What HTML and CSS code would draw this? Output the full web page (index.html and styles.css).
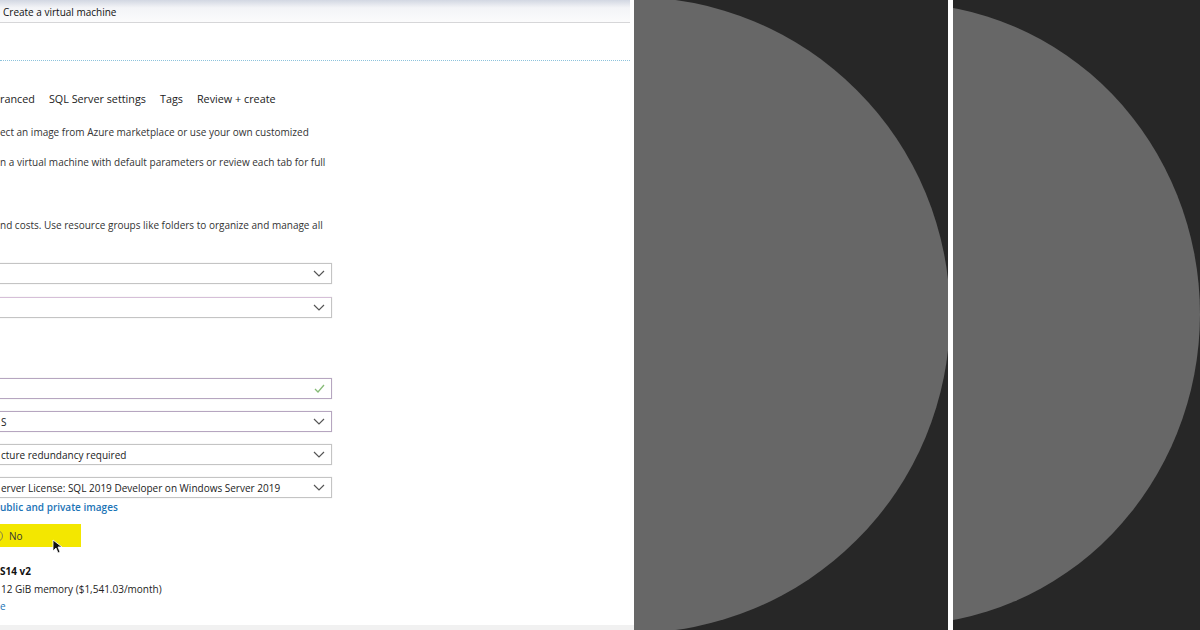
FILE: index.html
```html
<!DOCTYPE html>
<html lang="en">
<head>
  <meta charset="UTF-8" />
  <title>Create a virtual machine</title>
  <link rel="stylesheet" href="styles.css">
</head>
<body>

<div class="screen">

  <div class="blade">
    <div class="titlebar">Create a virtual machine</div>
    <div class="progress"></div>

    <div class="blade-body">
      <div class="tabs">
        <span>ranced</span>
        <span>SQL Server settings</span>
        <span>Tags</span>
        <span>Review + create</span>
      </div>

      <p class="desc first">ect an image from Azure marketplace or use your own customized</p>
      <p class="desc second">n a virtual machine with default parameters or review each tab for full</p>
      <p class="desc third">nd costs. Use resource groups like folders to organize and manage all</p>

      <div class="field sub">
        <span class="value"></span>
        <svg class="chevron" width="12" height="7" viewBox="0 0 12 7"><path d="M1 1l5 5 5-5" /></svg>
      </div>
      <div class="field group">
        <span class="value"></span>
        <svg class="chevron" width="12" height="7" viewBox="0 0 12 7"><path d="M1 1l5 5 5-5" /></svg>
      </div>

      <div class="field name purple">
        <span class="value"></span>
        <svg class="check" width="11" height="9" viewBox="0 0 11 9"><path d="M1 5l3 3 6-7" /></svg>
      </div>
      <div class="field region purple">
        <span class="value">S</span>
        <svg class="chevron" width="12" height="7" viewBox="0 0 12 7"><path d="M1 1l5 5 5-5" /></svg>
      </div>
      <div class="field">
        <span class="value">cture redundancy required</span>
        <svg class="chevron" width="12" height="7" viewBox="0 0 12 7"><path d="M1 1l5 5 5-5" /></svg>
      </div>
      <div class="field">
        <span class="value">erver License: SQL 2019 Developer on Windows Server 2019</span>
        <svg class="chevron" width="12" height="7" viewBox="0 0 12 7"><path d="M1 1l5 5 5-5" /></svg>
      </div>
      <a class="browse">ublic and private images</a>

      <div class="spot">
        <div class="highlight">
          <span class="radio"></span>
          <span>No</span>
        </div>
        <svg class="cursor" width="10" height="15" viewBox="0 0 10 15">
          <path d="M1 1v11l3-3 2 5 2-1-2-5h4z" fill="#111" stroke="#fff" stroke-width="0.8" />
        </svg>
      </div>

      <div class="size-name">S14 v2</div>
      <div class="size-info">12 GiB memory ($1,541.03/month)</div>
      <a class="change">e</a>
    </div>

    <div class="footer-bar"></div>
  </div>

  <div class="slide one">
    <svg width="314" height="630" viewBox="0 0 314 630">
      <circle cx="-2" cy="315" r="318" fill="#676767" />
    </svg>
  </div>

  <div class="divider"></div>

  <div class="slide two">
    <svg width="247" height="630" viewBox="0 0 247 630">
      <ellipse cx="-53" cy="314" rx="300" ry="311" fill="#676767" />
    </svg>
  </div>

</div>

</body>
</html>
```

FILE: styles.css
```css
body {
  margin: 0;
  font-family: "Open Sans", "Noto Sans", sans-serif;
  background: #fff;
  color: #222;
}

.screen {
  display: flex;
  width: 1200px;
  height: 630px;
  overflow: hidden;
}

/* ===== left blade ===== */
.blade {
  width: 634px;
  flex: none;
  background: #fff;
  display: flex;
  flex-direction: column;
  overflow: hidden;
}

.titlebar {
  width: 627px;
  height: 22px;
  padding-left: 3px;
  border-bottom: 1px solid #d6d6d8;
  background: linear-gradient(#d2d7e2 0, #f3f4f7 35%, #fbfbfc 100%);
  font-size: 10px;
  line-height: 24px;
  color: #111;
}

.progress {
  width: 630px;
  margin-top: 37px;
  border-top: 1px dotted #8dc3dc;
}

.blade-body {
  flex: 1;
  display: flex;
  flex-direction: column;
  align-items: flex-start;
}

.tabs {
  display: flex;
  gap: 14px;
  margin-top: 30px;
  font-size: 10.8px;
  line-height: 16px;
  color: #222;
}

.desc {
  margin: 0;
  font-size: 10px;
  line-height: 16px;
  color: #333;
}

.desc.first { margin-top: 17px; }
.desc.second { margin-top: 14px; }
.desc.third { margin-top: 47px; }

/* ===== form fields ===== */
.field {
  box-sizing: border-box;
  width: 352px;
  height: 21px;
  margin-left: -20px;
  margin-top: 12px;
  padding: 0 6px 0 20px;
  border: 1px solid #c4c4c4;
  box-shadow: 0 0 1px #ddd;
  display: flex;
  align-items: center;
  justify-content: space-between;
  font-size: 10px;
  color: #222;
}

.field.sub { margin-top: 30px; }
.field.group { margin-top: 13px; border-top-color: #d6bfd8; }
.field.name { margin-top: 60px; }

.field.purple {
  border-color: #b6a6c0;
}

.chevron path {
  fill: none;
  stroke: #555;
  stroke-width: 1.2;
}

.check path {
  fill: none;
  stroke: #86bb76;
  stroke-width: 1.3;
}

.browse {
  margin-top: 2px;
  font-size: 10px;
  line-height: 14px;
  font-weight: 600;
  color: #1b74b6;
}

/* ===== highlighted radio ===== */
.spot {
  position: relative;
  margin-top: 10px;
}

.highlight {
  width: 81px;
  height: 23px;
  background: #f3e700;
  display: flex;
  align-items: center;
  gap: 6px;
  font-size: 10px;
  color: #333;
}

.radio {
  flex: none;
  width: 10px;
  height: 10px;
  margin-left: -9px;
  border: 1px solid #8a8640;
  border-radius: 50%;
}

.cursor {
  position: absolute;
  left: 52px;
  top: 15px;
}

.size-name {
  margin-top: 17px;
  font-size: 10px;
  line-height: 14px;
  font-weight: 700;
  color: #111;
}

.size-info {
  margin-top: 4px;
  margin-left: 1px;
  font-size: 10px;
  line-height: 14px;
  color: #222;
}

.change {
  margin-top: 3px;
  font-size: 10px;
  line-height: 14px;
  color: #1b74b6;
}

.footer-bar {
  height: 5px;
  background: #f1f1f1;
}

/* ===== dark slides ===== */
.slide {
  height: 630px;
  background: #272727;
  overflow: hidden;
}

.slide svg {
  display: block;
}

.slide.one {
  width: 314px;
  flex: none;
}

.divider {
  width: 5px;
  flex: none;
  background: #fff;
}

.slide.two {
  flex: 1;
}
```
